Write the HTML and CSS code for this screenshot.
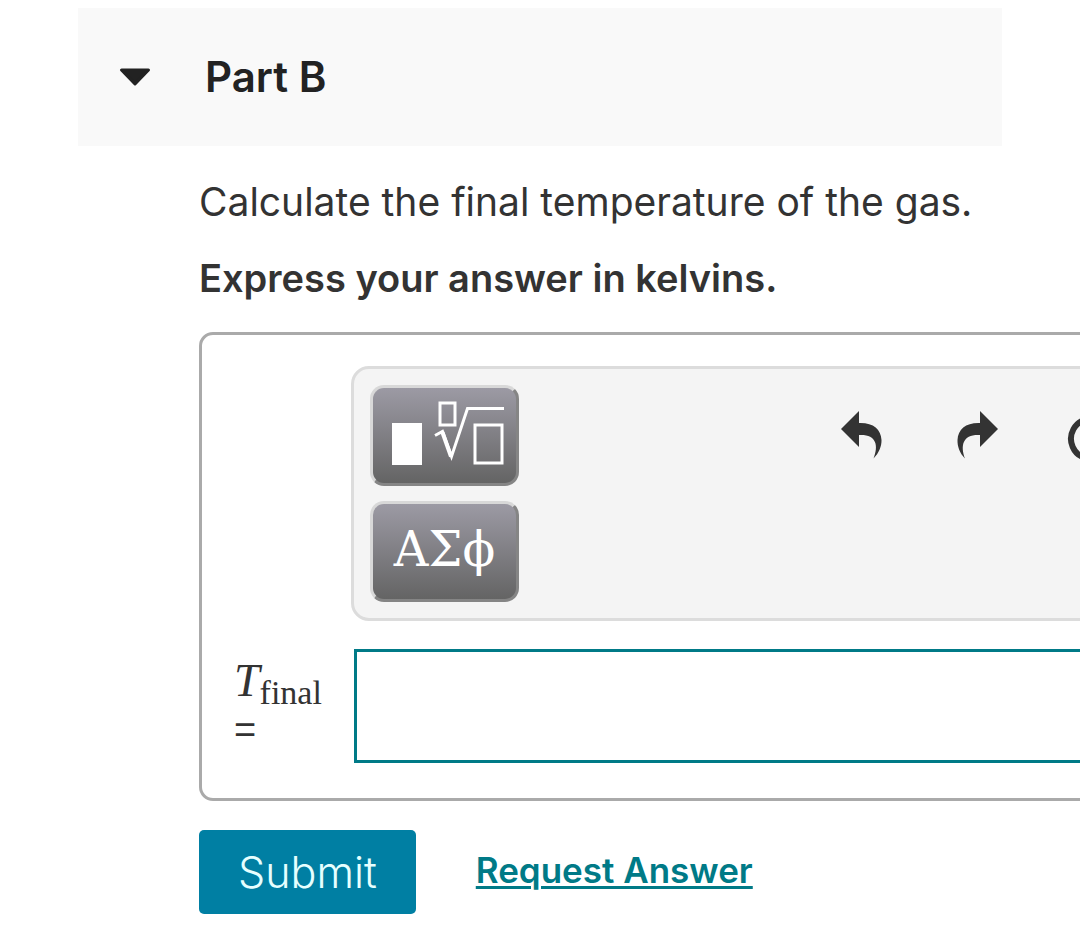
FILE: index.html
```html
<!DOCTYPE html>
<html lang="en">
<head>
<meta charset="utf-8">
<meta name="viewport" content="width=device-width, initial-scale=1">
<title>Part B</title>
<link rel="stylesheet" href="styles.css">
</head>
<body>
<main class="part">
  <header class="part-header">
    <button class="part-toggle" type="button" aria-expanded="true" aria-label="Collapse Part B">
      <svg width="32" height="20" viewBox="0 0 32 20" aria-hidden="true"><path d="M2.500 3h27L16 17z" fill="#222" stroke="#222" stroke-width="3" stroke-linejoin="round"/></svg>
    </button>
    <h2 class="part-title">Part B</h2>
  </header>
  <form class="part-body">
    <p class="question">Calculate the final temperature of the gas.</p>
    <p class="instruction">Express your answer in kelvins.</p>
    <div class="answer-scroll">
      <div class="answer-box">
        <div class="toolbar">
          <div class="palettes">
            <button class="palette" type="button" aria-label="Templates">
              <svg width="112" height="64" viewBox="0 0 112 64" fill="none" stroke="#fff" aria-hidden="true">
                <rect x="0" y="22" width="30" height="42" fill="#fff" stroke="none"/>
                <rect x="48" y="2" width="15" height="22" stroke-width="3"/>
                <rect x="83" y="24" width="27" height="38" stroke-width="3"/>
                <path d="M43 34.500l7.500-4 9 25L75.500 7.500H112" stroke-width="3"/>
                <path d="M50.500 31.500l8.500 24" stroke-width="4"/>
              </svg>
            </button>
            <button class="palette palette-greek" type="button" aria-label="Symbols">ΑΣϕ</button>
          </div>
          <div class="actions">
            <button class="action" type="button" aria-label="Undo">
              <svg width="56" height="56" viewBox="0 0 56 56" aria-hidden="true"><path d="M8 22L26 4v12c14-.5 22 6 22.500 17 .2 6-2.500 13-8 18.500C46 38 43 27 26 28v12z" fill="#333"/></svg>
            </button>
            <button class="action" type="button" aria-label="Redo">
              <svg width="56" height="56" viewBox="0 0 56 56" aria-hidden="true"><path d="M49 22L31 4v12C17 15.500 9 22 8.500 33c-.2 6 2 13 7.500 18.500C11 38 14 27 31 28v12z" fill="#333"/></svg>
            </button>
            <button class="action" type="button" aria-label="Reset">
              <svg width="56" height="56" viewBox="0 0 56 56" fill="none" aria-hidden="true"><path d="M40 17.500A20 20 0 1 0 46 31" stroke="#333" stroke-width="6"/><path d="M48 6v19H29z" fill="#333"/></svg>
            </button>
          </div>
        </div>
        <label class="answer-label" for="answer"><span class="math"><i>T</i><sub>final</sub></span> <span class="equals">=</span></label>
        <input class="answer-input" id="answer" type="text" autocomplete="off">
      </div>
    </div>
    <div class="submit-row">
      <button class="submit" type="button">Submit</button>
      <a class="request" href="#">Request Answer</a>
    </div>
  </form>
</main>
</body>
</html>
```
FILE: styles.css
```css
* { box-sizing: border-box; }

body {
  margin: 0;
  background: #fff;
  color: #333;
  font-family: Inter, "Liberation Sans", sans-serif;
}

button { font: inherit; cursor: pointer; }
svg { display: block; }

.part { padding: 8px 78px; }

.part-header {
  display: flex;
  align-items: center;
  gap: 54px;
  padding: 40px 41px;
  background: #f9f9f9;
  color: #222;
}

.part-toggle { padding: 0; border: 0; background: none; }

.part-title {
  margin: 0;
  font-size: 42px;
  line-height: 58px;
  font-weight: 600;
}

.part-body { padding-left: 121px; }

.question, .instruction { margin: 0; line-height: 56px; white-space: nowrap; }
.question { padding-top: 28px; font-size: 39px; font-weight: 400; }
.instruction { padding-top: 20px; font-size: 38px; font-weight: 600; }

/* The math editor is wider than its column; the page edge clips it. */
.answer-scroll {
  margin: 26px -78px 0 0;
  overflow: hidden;
}

.answer-box {
  display: grid;
  grid-template-columns: 117px 1fr;
  row-gap: 28px;
  margin-right: -95px;
  padding: 31px 32px 35px;
  border: 3px solid #aaa;
  border-radius: 14px;
}

.toolbar {
  grid-column: 2;
  display: flex;
  justify-content: space-between;
  align-items: flex-start;
  padding: 16px;
  border: 3px solid #dcdcdc;
  border-radius: 18px;
  background: #f4f4f4;
}

.palettes { display: grid; gap: 15px; }

.palette {
  display: flex;
  align-items: center;
  justify-content: center;
  width: 149px;
  height: 101px;
  padding: 0 0 6px 7px;
  border: 3px solid;
  border-color: #d8d8d8 #858585 #858585 #d8d8d8;
  border-radius: 14px;
  background: linear-gradient(#9c9aa4, #646464);
  color: #fff;
}

.palette-greek {
  padding: 0 0 6px;
  font-family: "DejaVu Serif", serif;
  font-size: 48px;
  line-height: 56px;
}

.actions { display: flex; gap: 60px; padding-top: 22px; }
.action { padding: 0; border: 0; background: none; }

.answer-label {
  align-self: center;
  display: flex;
  flex-direction: column;
  padding-bottom: 10px;
}

.math {
  font-family: "Liberation Serif", serif;
  font-size: 46px;
  line-height: 56px;
  white-space: nowrap;
}
.math sub { font-size: 34px; line-height: 1; vertical-align: -8px; }
.equals { font-family: "Liberation Sans", sans-serif; font-size: 38px; line-height: 40px; }

.answer-input {
  height: 114px;
  margin-left: 3px;
  padding: 0 16px;
  border: 3px solid #007a87;
  background: #fff;
  color: #333;
  font: 40px "Liberation Serif", serif;
  outline: none;
}

.submit-row { display: flex; align-items: center; gap: 60px; margin-top: 29px; }

.submit {
  padding: 14px 39px;
  border: 0;
  border-radius: 5px;
  background: #007fa3;
  color: #e6ffff;
  font-size: 43px;
  line-height: 56px;
  font-weight: 300;
}

.request {
  padding-bottom: 4px;
  color: #007a87;
  font-size: 35px;
  font-weight: 600;
  line-height: 56px;
  white-space: nowrap;
  text-decoration-thickness: 3px;
  text-underline-offset: 3px;
}
```
